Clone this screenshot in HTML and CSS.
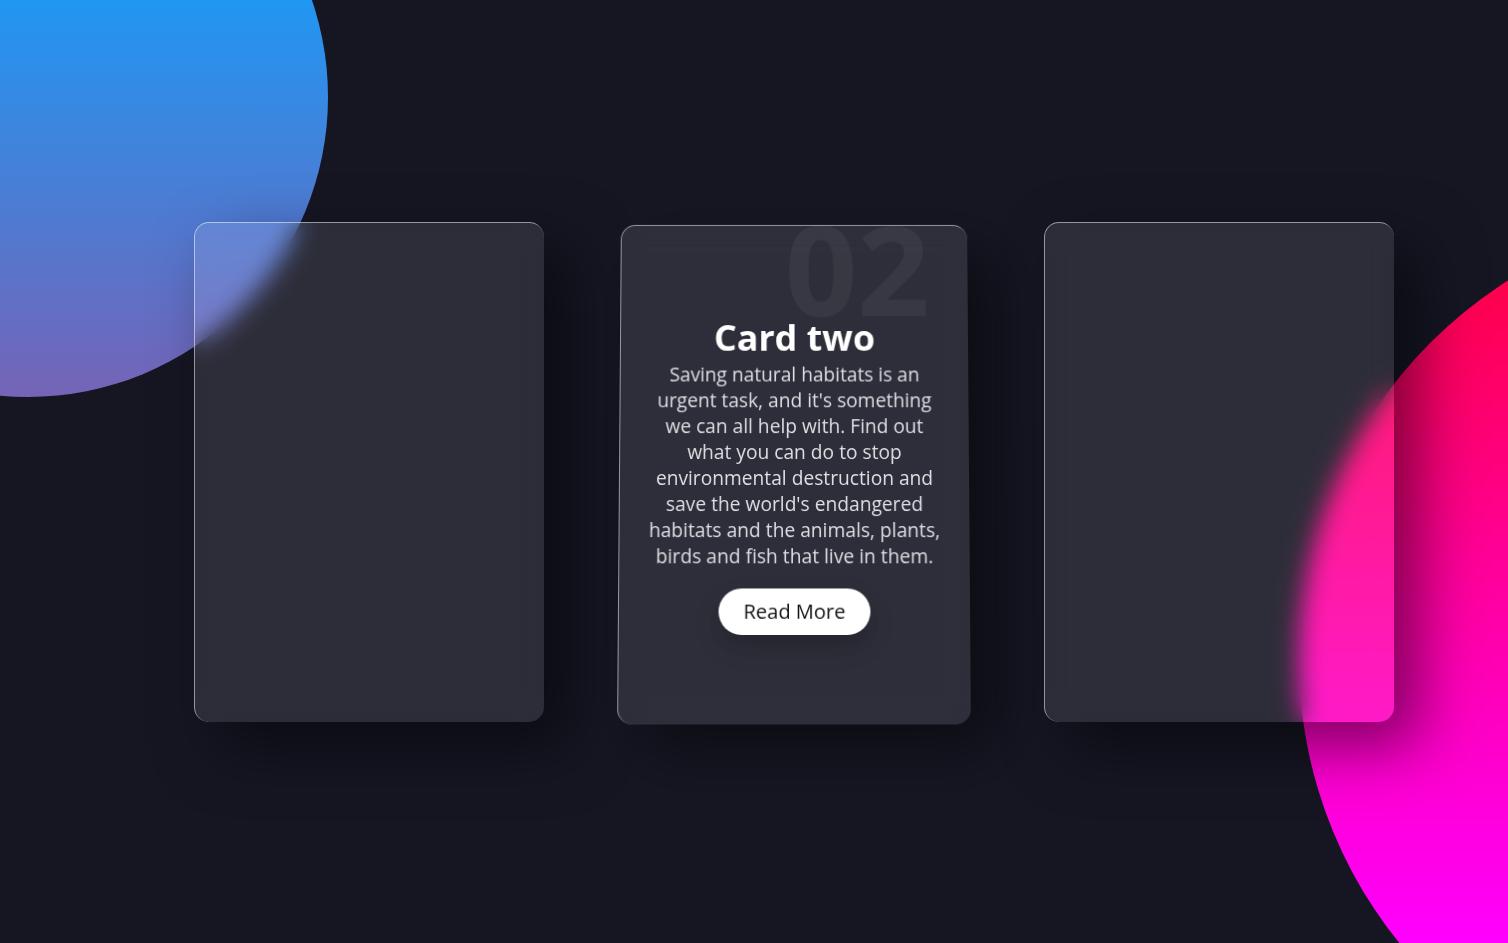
FILE: index.html
```html
<!DOCTYPE html>
<html lang="en">
<head>
<meta charset="utf-8">
<title>Glass Cards</title>
<link rel="stylesheet" href="styles.css">
</head>
<body>
<div class="blob blob-blue"></div>
<div class="blob blob-pink"></div>
<main class="container">
  <div class="card"></div>
  <div class="card card-active">
    <div class="content">
      <h2 class="num">02</h2>
      <h3 class="title">Card two</h3>
      <p class="text">Saving natural habitats is an urgent task, and it's something we can all help with. Find out what you can do to stop environmental destruction and save the world's endangered habitats and the animals, plants, birds and fish that live in them.</p>
      <a class="btn" href="#">Read More</a>
    </div>
  </div>
  <div class="card"></div>
</main>
</body>
</html>
```
FILE: styles.css
```css
* {
  margin: 0;
  padding: 0;
  box-sizing: border-box;
}

html, body {
  width: 100%;
  height: 100%;
}

body {
  background: #161623;
  overflow: hidden;
  font-family: "Open Sans", "Noto Sans", sans-serif;
  position: relative;
}

.blob {
  position: absolute;
  inset: 0;
  pointer-events: none;
}

.blob-blue {
  background: linear-gradient(#2196f3, #e91e63);
  clip-path: circle(300px at 28px 97px);
}

.blob-pink {
  background: linear-gradient(#f00, #f0f);
  clip-path: circle(449px at 1748px 660px);
}

.container {
  position: relative;
  z-index: 1;
  height: 100%;
  display: flex;
  justify-content: center;
  align-items: center;
  gap: 75px;
  padding-left: 80px;
}

.card {
  position: relative;
  width: 350px;
  height: 500px;
  flex: none;
  border-radius: 15px;
  background: rgba(255, 255, 255, 0.1);
  border-top: 1px solid rgba(255, 255, 255, 0.5);
  border-left: 1px solid rgba(255, 255, 255, 0.5);
  box-shadow: 25px 25px 62px rgba(0, 0, 0, 0.5);
  backdrop-filter: blur(12px);
  -webkit-backdrop-filter: blur(12px);
  overflow: hidden;
  display: flex;
  justify-content: center;
  align-items: center;
}

.card-active {
  transform: perspective(1000px) rotateX(2.5deg);
}

.content {
  padding: 25px;
  display: flex;
  flex-direction: column;
  align-items: center;
  text-align: center;
}

.num {
  position: absolute;
  top: -21px;
  right: 38px;
  font-size: 128px;
  line-height: 1;
  font-weight: 700;
  color: rgba(255, 255, 255, 0.05);
  pointer-events: none;
}

.title {
  position: relative;
  z-index: 1;
  font-size: 36px;
  font-weight: 700;
  color: #fff;
  line-height: 49px;
}

.text {
  font-size: 19.2px;
  line-height: 26px;
  font-weight: 400;
  color: #dedee3;
}

.btn {
  display: block;
  margin-top: 19px;
  padding: 10px 25px;
  background: #fff;
  color: #111;
  border-radius: 25px;
  text-decoration: none;
  font-size: 20px;
  line-height: 26px;
  font-weight: 400;
  box-shadow: 0 12px 25px rgba(0, 0, 0, 0.2);
}
```
